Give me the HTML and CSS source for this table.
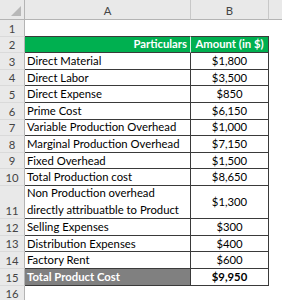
FILE: index.html
```html
<!DOCTYPE html>
<html>
<head>
<meta charset="utf-8">
<link rel="stylesheet" href="styles.css">
</head>
<body>
<div class="sheet">
  <div class="corner"><span class="tri"></span></div>
  <div class="colhead">A</div>
  <div class="colhead">B</div>
  <div class="colhead last"></div>

  <div class="rn">1</div><div class="blank"></div><div class="blank"></div><div class="blank"></div>

  <div class="rn">2</div><div class="c a hdr right">Particulars</div><div class="c b hdr">Amount (in $)</div><div class="blank"></div>

  <div class="rn">3</div><div class="c a">Direct Material</div><div class="c b">$1,800</div><div class="blank"></div>
  <div class="rn">4</div><div class="c a">Direct Labor</div><div class="c b">$3,500</div><div class="blank"></div>
  <div class="rn">5</div><div class="c a">Direct Expense</div><div class="c b">$850</div><div class="blank"></div>
  <div class="rn">6</div><div class="c a">Prime Cost</div><div class="c b">$6,150</div><div class="blank"></div>
  <div class="rn">7</div><div class="c a">Variable Production Overhead</div><div class="c b">$1,000</div><div class="blank"></div>
  <div class="rn">8</div><div class="c a">Marginal Production Overhead</div><div class="c b">$7,150</div><div class="blank"></div>
  <div class="rn">9</div><div class="c a">Fixed Overhead</div><div class="c b">$1,500</div><div class="blank"></div>
  <div class="rn">10</div><div class="c a">Total Production cost</div><div class="c b">$8,650</div><div class="blank"></div>
  <div class="rn tall">11</div><div class="c a wrap">Non Production overhead directly attribuatble to Product</div><div class="c b">$1,300</div><div class="blank"></div>
  <div class="rn">12</div><div class="c a">Selling Expenses</div><div class="c b">$300</div><div class="blank"></div>
  <div class="rn">13</div><div class="c a">Distribution Expenses</div><div class="c b">$400</div><div class="blank"></div>
  <div class="rn">14</div><div class="c a">Factory Rent</div><div class="c b">$600</div><div class="blank"></div>
  <div class="rn">15</div><div class="c a total">Total Product Cost</div><div class="c b bold">$9,950</div><div class="blank"></div>
  <div class="rn">16</div><div class="blank"></div><div class="blank"></div><div class="blank"></div>
</div>
</body>
</html>
```
FILE: styles.css
```css
html, body {
  margin: 0;
  padding: 0;
  background: #ffffff;
}
.sheet {
  display: grid;
  grid-template-columns: 25px 166px 78px 1fr;
  grid-template-rows: 20px repeat(10, 16.6px) 33.2px repeat(5, 16.6px);
  width: 282px;
  font-family: Lato, "Open Sans", sans-serif;
  font-size: 11.3px;
  color: #000;
}
.corner {
  background: #e9e9e9;
  border-right: 1px solid #b4b4b4;
  border-bottom: 1px solid #b4b4b4;
  position: relative;
}
.tri {
  position: absolute;
  right: 3px;
  bottom: 3px;
  width: 0;
  height: 0;
  border-left: 10px solid transparent;
  border-bottom: 10px solid #b8b8b8;
}
.colhead {
  background: #e9e9e9;
  border-right: 1px solid #c8c8c8;
  border-bottom: 1px solid #b4b4b4;
  color: #444;
  display: flex;
  align-items: center;
  justify-content: center;
  padding-top: 2px;
}
.colhead.last {
  border-right: none;
}
.rn {
  background: #e9e9e9;
  border-right: 1px solid #b4b4b4;
  border-bottom: 1px solid #dadada;
  color: #444;
  display: flex;
  align-items: flex-end;
  justify-content: center;
  padding-bottom: 1px;
}
.blank {
  background: #fff;
}
.c {
  display: flex;
  align-items: center;
  border-bottom: 1px solid #3a3a3a;
  border-right: 1px solid #3a3a3a;
  white-space: nowrap;
  overflow: hidden;
  line-height: 16px;
}
.c.a {
  padding-left: 2px;
}
.c.b {
  justify-content: center;
}
.hdr {
  background: #00b050;
  color: #fff;
  font-weight: bold;
  border-top: 1px solid #3a3a3a;
  margin-top: -1px;
}
.hdr.right {
  justify-content: flex-end;
  padding-right: 3px;
  border-right-color: #d8f0e2;
}
.wrap {
  white-space: normal;
  line-height: 16.6px;
}
.total {
  background: #808080;
  color: #fff;
  font-weight: bold;
}
.bold {
  font-weight: bold;
}
```
